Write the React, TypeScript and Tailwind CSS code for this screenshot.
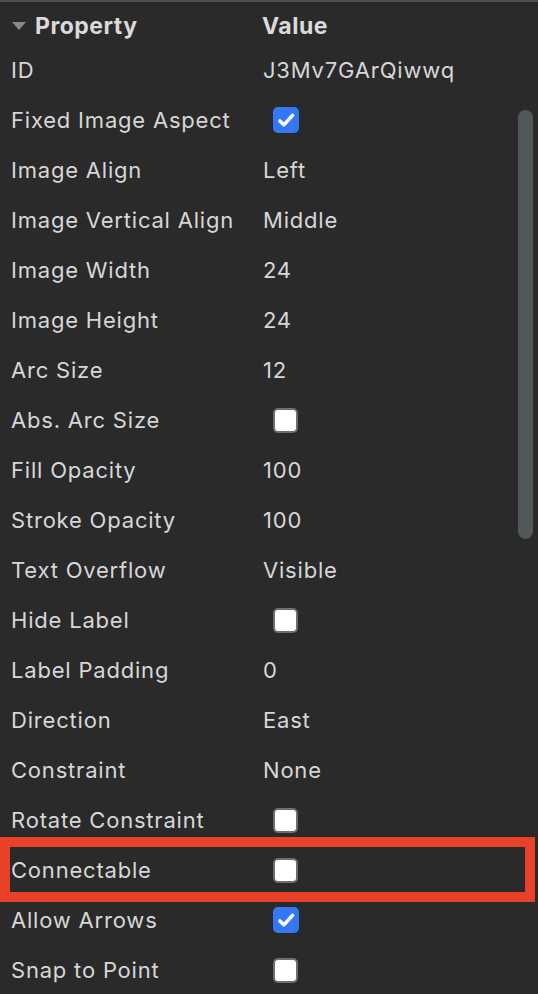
import * as React from 'react';

type Row = { label: string; value?: string; check?: boolean };

const ROWS: Row[] = [
  { label: 'ID', value: 'J3Mv7GArQiwwq' },
  { label: 'Fixed Image Aspect', check: true },
  { label: 'Image Align', value: 'Left' },
  { label: 'Image Vertical Align', value: 'Middle' },
  { label: 'Image Width', value: '24' },
  { label: 'Image Height', value: '24' },
  { label: 'Arc Size', value: '12' },
  { label: 'Abs. Arc Size', check: false },
  { label: 'Fill Opacity', value: '100' },
  { label: 'Stroke Opacity', value: '100' },
  { label: 'Text Overflow', value: 'Visible' },
  { label: 'Hide Label', check: false },
  { label: 'Label Padding', value: '0' },
  { label: 'Direction', value: 'East' },
  { label: 'Constraint', value: 'None' },
  { label: 'Rotate Constraint', check: false },
  { label: 'Connectable', check: false },
  { label: 'Allow Arrows', check: true },
  { label: 'Snap to Point', check: false },
];

function Checkbox({ checked }: { checked: boolean }) {
  if (checked) {
    return (
      <div className="w-[26px] h-[26px] rounded-[5px] bg-[#3478f6] flex items-center justify-center">
        <svg viewBox="0 0 24 24" className="w-[21px] h-[21px]" fill="none" stroke="white" strokeWidth="4" strokeLinecap="round" strokeLinejoin="round">
          <path d="M4.5 12.5l4.5 4.5 10-11" />
        </svg>
      </div>
    );
  }
  return <div className="w-[25px] h-[25px] rounded-[5px] bg-white border-2 border-[#6e6e6e]" />;
}

function PropRow({ row }: { row: Row }) {
  const highlight = row.label === 'Connectable';
  return (
    <div className="relative flex items-center h-[50px]">
      <div className="w-[252px] pl-[11px] truncate">{row.label}</div>
      <div className="flex-1 flex items-center">
        {row.check === undefined ? (
          <span className="pl-[11px]">{row.value}</span>
        ) : (
          <div className="pl-[21px]">
            <Checkbox checked={row.check} />
          </div>
        )}
      </div>
      {highlight && (
        <div className="absolute left-0 top-[-8px] w-[535px] h-[65px] border-[10px] border-[#e9402a] pointer-events-none" />
      )}
    </div>
  );
}

export default function App() {
  return (
    <div
      className="relative w-[538px] h-[994px] overflow-hidden bg-[#2a2a2a] text-[#d7d7d7] text-[22px] tracking-[0.8px] border-t-2 border-[#4e4e4e]"
      style={{ fontFamily: 'Inter, "Noto Sans", sans-serif' }}
    >
      {/* Header */}
      <div className="flex items-center h-[43px] pt-[5px] font-bold text-[23px] tracking-[0.5px] text-[#dadada]">
        <div className="w-[250px] pl-[12px] flex items-center gap-[9px]">
          <svg viewBox="0 0 14 8" className="w-[14px] h-[8px]">
            <path d="M0 0h14L7 8z" fill="#8a8a8a" />
          </svg>
          <span>Property</span>
        </div>
        <div className="pl-[12px]">Value</div>
      </div>

      {ROWS.map((r) => (
        <PropRow key={r.label} row={r} />
      ))}

      {/* Scrollbar */}
      <div className="absolute left-[518px] top-[108px] w-[15px] h-[429px] rounded-full bg-[#52575a]" />
    </div>
  );
}
